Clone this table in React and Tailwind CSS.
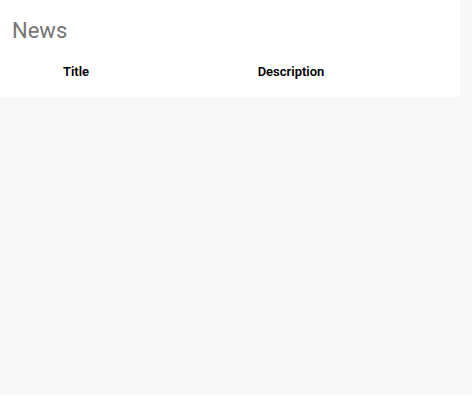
import React from 'react';

const columns = [
  { key: 'title', label: 'Title', width: 'w-[152px]' },
  { key: 'description', label: 'Description', width: 'w-[278px]' },
];

const NewsTable = () => {
  return (
    <div className="w-[460px] bg-white pt-[18px] pb-[13px]">
      <h2 className="px-3 text-[22px] leading-[26px] font-normal text-[#757575]">News</h2>
      <table className="mt-[15px] border-collapse">
        <thead>
          <tr>
            {columns.map((col) => (
              <th
                key={col.key}
                className={`${col.width} h-[25px] p-0 text-center text-[13px] font-semibold text-black`}
              >
                {col.label}
              </th>
            ))}
          </tr>
        </thead>
        <tbody />
      </table>
    </div>
  );
};

export default function App() {
  return (
    <div className="w-[474px] h-[398px] bg-white font-['Roboto',sans-serif]">
      <div className="w-[472px] h-[395px] bg-[#f7f8fa]">
        <NewsTable />
      </div>
    </div>
  );
}
